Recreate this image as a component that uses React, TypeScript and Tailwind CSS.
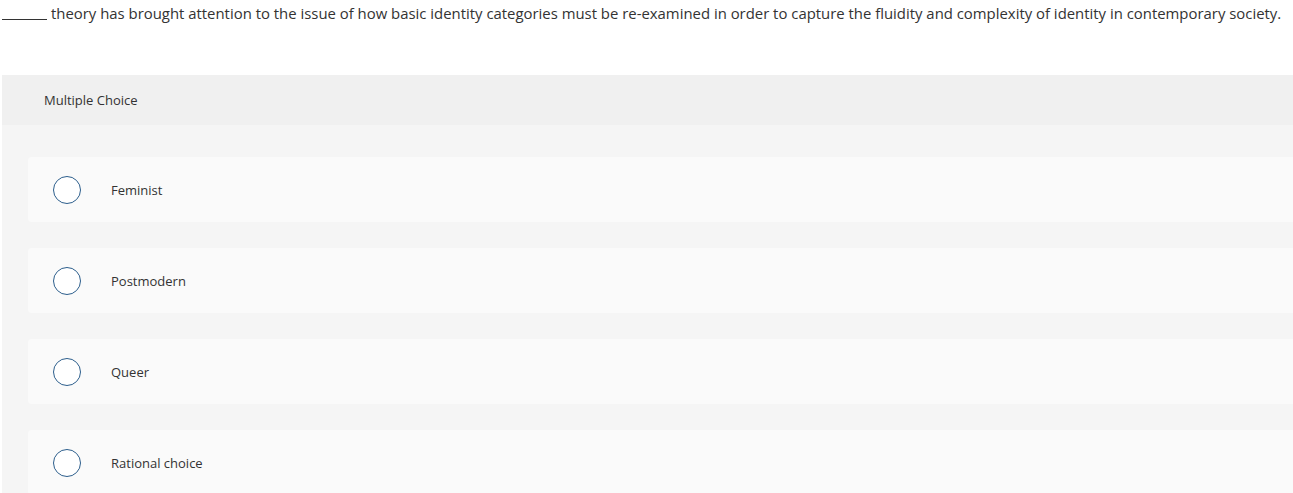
import React from 'react';

const choices = ['Feminist', 'Postmodern', 'Queer', 'Rational choice'];

export default function App() {
  return (
    <div className="min-h-screen bg-white text-[#333] font-['Open_Sans',sans-serif]">
      {/* question */}
      <p className="pl-[2px] pt-[3px] text-[14.9px] leading-[20px] whitespace-nowrap">
        <span className="inline-block w-[45px] border-b border-[#333] align-baseline mr-[4px] translate-y-[1px]"></span>
        theory has brought attention to the issue of how basic identity categories must be re-examined in order to capture the fluidity and complexity of identity in contemporary society.
      </p>

      <div className="mt-[52px] ml-[2px]">
        <div className="h-[50px] bg-[#f0f0f0] pl-[42px] flex items-center text-[13px]">
          <span className="translate-y-[1px]">Multiple Choice</span>
        </div>
        <div className="bg-[#f5f5f5] pl-[26px] pt-[32px] pb-[26px] flex flex-col gap-[26px]">
          {choices.map((c) => (
            <label key={c} className="h-[65px] bg-[#fafafa] rounded-l-[4px] flex items-center pl-[25px] text-[13px] cursor-pointer">
              <span className="w-[28px] h-[28px] rounded-full border-[1.5px] border-[#2c5e8c] bg-white shrink-0"></span>
              <span className="ml-[30px] translate-y-[1px]">{c}</span>
            </label>
          ))}
        </div>
      </div>
    </div>
  );
}
